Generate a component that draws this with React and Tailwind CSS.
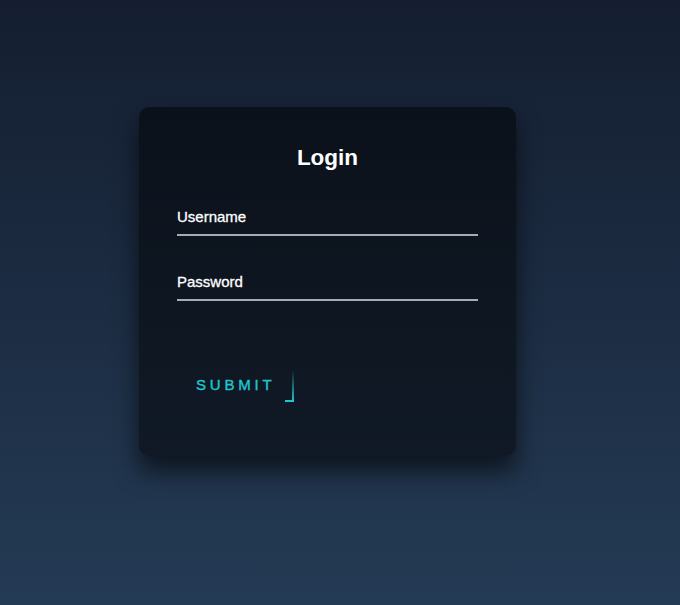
export default function App() {
  return (
    <div
      className="min-h-[605px] w-full bg-gradient-to-b from-[#141e30] to-[#243b55] pt-[107px] pl-[139px]"
      style={{ fontFamily: '"Liberation Sans", Arial, sans-serif' }}
    >
      <div className="w-[377px] h-[349px] rounded-[10px] bg-black/50 shadow-[0_15px_25px_rgba(0,0,0,0.6)] px-[38px] pt-[38px]">
        <h2 className="text-white text-[22.5px] font-bold text-center leading-[26px] mb-[28px]">
          Login
        </h2>
        <div className="h-[37px] border-b-2 border-[#a9abb0] pt-[9px] mb-[28px]">
          <div className="text-white text-[15px] leading-[17px] [-webkit-text-stroke:0.3px_#ffffff]">Username</div>
        </div>
        <div className="h-[37px] border-b-2 border-[#a9abb0] pt-[9px]">
          <div className="text-white text-[15px] leading-[17px] [-webkit-text-stroke:0.3px_#ffffff]">Password</div>
        </div>
        <div className="mt-[66px]">
          <div className="relative inline-block px-[19px] py-[9px] text-[#1fc6cf] text-[15px] leading-[17px] tracking-[3.8px] uppercase [-webkit-text-stroke:0.4px_#1fc6cf]">
            Submit
            <span className="absolute right-0 bottom-0 w-[2px] h-[32px] bg-gradient-to-b from-transparent to-[#1fc6cf]" />
            <span className="absolute right-0 bottom-0 h-[2px] w-[9px] bg-[#1fc6cf]" />
          </div>
        </div>
      </div>
    </div>
  );
}
